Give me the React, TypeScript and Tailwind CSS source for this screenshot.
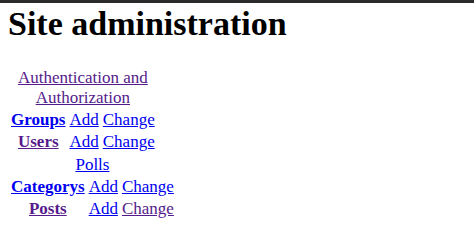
import React from "react";

const blue = "text-[#0000ee]";
const purple = "text-[#551a8b]";

function L({ c, children }: { c: string; children: React.ReactNode }) {
  return (
    <a href="#" className={`${c} underline`}>
      {children}
    </a>
  );
}

function Row({ name, nc, addc, chc }: { name: string; nc: string; addc: string; chc: string }) {
  return (
    <tr>
      <th className="p-[1px] text-center font-bold">
        <L c={nc}>{name}</L>
      </th>
      <td className="p-[1px]">
        <L c={addc}>Add</L>
      </td>
      <td className="p-[1px]">
        <L c={chc}>Change</L>
      </td>
    </tr>
  );
}

export default function App() {
  return (
    <div
      className="min-h-[248px] bg-white text-black text-[17px] leading-[18.3px]"
      style={{ fontFamily: '"Liberation Serif", "Times New Roman", serif' }}
    >
      <div className="h-[3px] bg-[#2b2b2b]" />
      <div className="px-[8px]">
        <h1 className="text-[34px] font-bold leading-[normal] mt-[2px] mb-[25px]">Site administration</h1>
        <table className="border-separate border-spacing-[2px]">
          <caption className="leading-[20px]">
            <L c={purple}>Authentication and Authorization</L>
          </caption>
          <tbody>
            <Row name="Groups" nc={blue} addc={blue} chc={blue} />
            <Row name="Users" nc={purple} addc={blue} chc={blue} />
          </tbody>
        </table>
        <table className="border-separate border-spacing-[2px]">
          <caption className="leading-[20px]">
            <L c={blue}>Polls</L>
          </caption>
          <tbody>
            <Row name="Categorys" nc={blue} addc={blue} chc={blue} />
            <Row name="Posts" nc={purple} addc={blue} chc={purple} />
          </tbody>
        </table>
      </div>
    </div>
  );
}
